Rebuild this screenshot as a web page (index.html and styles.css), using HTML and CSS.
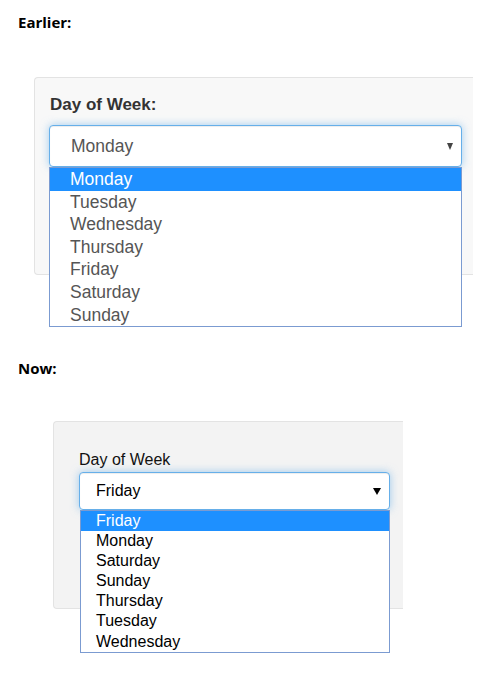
FILE: index.html
```html
<!DOCTYPE html>
<html lang="en">
<head>
<meta charset="utf-8">
<title>Day of Week select</title>
<link rel="stylesheet" href="styles.css">
</head>
<body>
  <section class="demo demo-old">
    <h2 class="caption">Earlier:</h2>
    <div class="panel">
      <div class="label">Day of Week:</div>
      <div class="field">
        <div class="select">
          <span class="value">Monday</span>
          <span class="arrow"></span>
        </div>
        <ul class="options">
          <li class="opt active">Monday</li>
          <li class="opt">Tuesday</li>
          <li class="opt">Wednesday</li>
          <li class="opt">Thursday</li>
          <li class="opt">Friday</li>
          <li class="opt">Saturday</li>
          <li class="opt">Sunday</li>
        </ul>
      </div>
    </div>
  </section>

  <section class="demo demo-new">
    <h2 class="caption">Now:</h2>
    <div class="panel">
      <div class="label">Day of Week</div>
      <div class="field">
        <div class="select">
          <span class="value">Friday</span>
          <span class="arrow"></span>
        </div>
        <ul class="options">
          <li class="opt active">Friday</li>
          <li class="opt">Monday</li>
          <li class="opt">Saturday</li>
          <li class="opt">Sunday</li>
          <li class="opt">Thursday</li>
          <li class="opt">Tuesday</li>
          <li class="opt">Wednesday</li>
        </ul>
      </div>
    </div>
  </section>
</body>
</html>
```
FILE: styles.css
```css
html, body {
  margin: 0;
  padding: 0;
  background: #ffffff;
}

body {
  font-family: "Liberation Sans", Arial, sans-serif;
  color: #000;
  min-height: 687px;
}

.caption {
  margin: 0;
  padding-left: 18px;
  font-family: "Open Sans", "Liberation Sans", sans-serif;
  font-weight: 700;
  font-size: 15px;
  line-height: 20px;
  color: #000;
}

.demo-old .caption { padding-top: 12px; }
.demo-new .caption { padding-top: 83px; }
.demo-new { padding-bottom: 70px; }

.panel {
  box-sizing: border-box;
  border: 1px solid #e3e3e3;
  border-right: none;
  border-radius: 4px 0 0 4px;
}

.field {
  position: relative;
}

.select {
  box-sizing: border-box;
  display: flex;
  align-items: center;
  justify-content: space-between;
  background: #fff;
  border: 1px solid #66afe9;
  border-radius: 4px;
  box-shadow: inset 0 1px 1px rgba(0,0,0,.075), 0 0 8px rgba(102,175,233,.6);
}

.arrow {
  width: 0;
  height: 0;
  border-style: solid;
  border-color: transparent;
}

.options {
  position: absolute;
  top: 100%;
  margin: 0;
  padding: 0;
  list-style: none;
  box-sizing: border-box;
  background: #fff;
  border: 1px solid #7b9bd1;
  z-index: 2;
}

.opt.active {
  background: #1e90ff;
  color: #fff;
}

/* ---------- Earlier ---------- */
.demo-old .panel {
  margin: 45px 0 0 34px;
  width: 439px;
  height: 198px;
  background: #f8f8f8;
  padding: 17px 0 0 14px;
}

.demo-old .label {
  font-weight: 700;
  font-size: 17px;
  line-height: 20px;
  color: #333;
  padding-left: 1px;
}

.demo-old .field {
  margin-top: 10px;
  width: 413px;
}

.demo-old .select {
  height: 42px;
  padding: 0 8px 0 21px;
}

.demo-old .value {
  font-size: 17.5px;
  color: #555;
}

.demo-old .arrow {
  border-width: 7px 3.5px 0 3.5px;
  border-top-color: #444;
  margin-top: 1px;
}

.demo-old .options {
  left: 0;
  width: 413px;
}

.demo-old .opt {
  height: 22.6px;
  line-height: 22.6px;
  font-size: 17.5px;
  padding-left: 20px;
  color: #555;
}

.demo-old .opt.active { color: #fff; }

/* ---------- Now ---------- */
.demo-new .panel {
  margin: 43px 0 0 53px;
  width: 350px;
  height: 188px;
  background: #f3f3f3;
  padding: 29px 0 0 25px;
}

.demo-new .label {
  font-size: 16px;
  line-height: 18px;
  color: #111;
}

.demo-new .field {
  margin-top: 3px;
  width: 311px;
}

.demo-new .select {
  height: 38px;
  padding: 0 8px 0 16px;
}

.demo-new .value {
  font-size: 16px;
  color: #000;
}

.demo-new .arrow {
  border-width: 7px 4.5px 0 4.5px;
  border-top-color: #000;
  margin-top: 1px;
}

.demo-new .options {
  left: 1px;
  width: 310px;
}

.demo-new .opt {
  height: 20.1px;
  line-height: 20.1px;
  font-size: 16px;
  padding-left: 15px;
  color: #000;
}

.demo-new .opt.active { color: #fff; }
```
